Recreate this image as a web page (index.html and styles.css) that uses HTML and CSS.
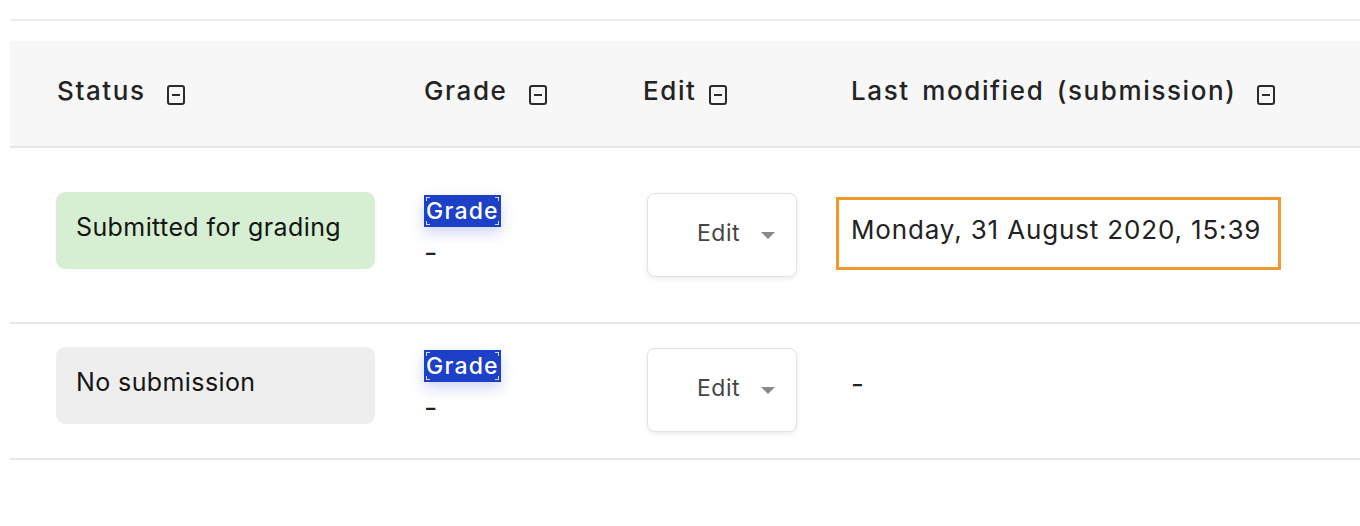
FILE: index.html
```html
<!DOCTYPE html>
<html lang="en">
    <head>
        <meta charset="UTF-8">
        <title>Submissions</title>
        <link rel="stylesheet" href="styles.css">
    </head>
    <body>
        <div class="page">
            <div class="rule"></div>
            <table class="grading">
                <colgroup>
                    <col class="c-status">
                    <col class="c-grade">
                    <col class="c-edit">
                    <col>
                </colgroup>
                <thead>
                    <tr>
                        <th class="status">Status<span class="hide"></span></th>
                        <th>Grade<span class="hide"></span></th>
                        <th>Edit<span class="hide near"></span></th>
                        <th class="date">Last modified (submission)<span class="hide"></span></th>
                    </tr>
                </thead>
                <tbody>
                    <tr class="tall">
                        <td class="status"><div class="badge submitted">Submitted for grading</div></td>
                        <td class="grade"><span class="mark">Grade</span><div class="dash">-</div></td>
                        <td class="edit"><button class="menu">Edit<span class="caret"></span></button></td>
                        <td class="date"><span class="stamp">Monday, 31 August 2020, 15:39</span></td>
                    </tr>
                    <tr class="short">
                        <td class="status"><div class="badge none">No submission</div></td>
                        <td class="grade"><span class="mark">Grade</span><div class="dash">-</div></td>
                        <td class="edit"><button class="menu">Edit<span class="caret"></span></button></td>
                        <td class="date"><div class="empty">-</div></td>
                    </tr>
                </tbody>
            </table>
        </div>
    </body>
</html>
```

FILE: styles.css
```css
body {
	margin: 0;
	background-color: white;
	font-family: Inter, "DejaVu Sans", sans-serif;
	color: #1f1f1f;
}
div.page {
	padding: 19px 0 0 10px;
}
div.rule {
	height: 2px;
	background-color: #ebebeb;
	margin-bottom: 20px;
}
table.grading {
	width: 100%;
	border-collapse: collapse;
	table-layout: fixed;
}
col.c-status {
	width: 414px;
}
col.c-grade {
	width: 219px;
}
col.c-edit {
	width: 193px;
}
th {
	height: 99px;
	padding: 0 0 6px 0;
	background-color: #f7f7f7;
	border-bottom: 2px solid #e6e6e6;
	text-align: left;
	font-weight: 500;
	font-size: 26px;
	letter-spacing: 1.6px;
	color: #232323;
	white-space: nowrap;
}
th.status {
	padding-left: 47px;
}
th.date {
	padding-left: 15px;
	word-spacing: 4px;
}
span.hide {
	display: inline-block;
	position: relative;
	width: 14px;
	height: 16px;
	margin-left: 21px;
	border: 2px solid #2b2b2b;
	border-radius: 3px;
	vertical-align: -5px;
}
span.hide.near {
	margin-left: 12px;
}
span.hide::after {
	content: "";
	position: absolute;
	left: 3px;
	right: 3px;
	top: 7px;
	height: 2px;
	background-color: #2b2b2b;
}
td {
	padding: 44px 0 45px 0;
	vertical-align: top;
	border-bottom: 2px solid #e6e6e6;
}
tr.short td {
	padding: 23px 0 26px 0;
}
td.status {
	padding-left: 46px !important;
}
td.edit {
	padding-left: 4px !important;
}
div.badge {
	box-sizing: border-box;
	width: 319px;
	height: 77px;
	padding: 20px 20px 0 20px;
	border-radius: 9px;
	font-size: 25px;
	line-height: 30px;
	letter-spacing: 0.4px;
	color: #151515;
}
div.badge.submitted {
	background-color: #d6efd3;
}
div.badge.none {
	background-color: #eeeeee;
}
span.mark {
	display: inline-block;
	margin-top: 3px;
	height: 32px;
	padding: 0 2px;
	font-size: 23px;
	font-weight: 500;
	line-height: 32px;
	letter-spacing: 1.2px;
	color: white;
	background:
		linear-gradient(#d5dcf7, #d5dcf7) 2px 2px / 4px 1px no-repeat,
		linear-gradient(#d5dcf7, #d5dcf7) 2px 2px / 1px 4px no-repeat,
		linear-gradient(#d5dcf7, #d5dcf7) right 2px top 2px / 4px 1px no-repeat,
		linear-gradient(#d5dcf7, #d5dcf7) right 2px top 2px / 1px 4px no-repeat,
		linear-gradient(#d5dcf7, #d5dcf7) left 2px bottom 2px / 4px 1px no-repeat,
		linear-gradient(#d5dcf7, #d5dcf7) left 2px bottom 2px / 1px 4px no-repeat,
		linear-gradient(#d5dcf7, #d5dcf7) right 2px bottom 2px / 4px 1px no-repeat,
		linear-gradient(#d5dcf7, #d5dcf7) right 2px bottom 2px / 1px 4px no-repeat,
		#1d40c8;
	box-shadow: 0 6px 14px rgba(40, 70, 210, 0.22);
}
div.dash {
	margin-top: 9px;
	font-size: 29px;
	line-height: 34px;
	color: #222;
}
button.menu {
	display: flex;
	align-items: center;
	box-sizing: border-box;
	width: 150px;
	height: 84px;
	margin-top: 1px;
	padding: 0 0 4px 49px;
	background-color: white;
	border: 1px solid #dfe3ea;
	border-radius: 8px;
	box-shadow: 0 2px 5px rgba(0, 0, 0, 0.08);
	font-family: inherit;
	font-size: 23px;
	letter-spacing: 0.5px;
	color: #454545;
	cursor: pointer;
}
span.caret {
	width: 0;
	height: 0;
	margin-left: 21px;
	margin-top: 4px;
	border-left: 7px solid transparent;
	border-right: 7px solid transparent;
	border-top: 7px solid #8a8a8a;
}
span.stamp {
	display: inline-block;
	box-sizing: border-box;
	height: 73px;
	margin-top: 5px;
	padding: 14px 17px 0 12px;
	border: 3px solid #f0992f;
	font-size: 26px;
	line-height: 32px;
	letter-spacing: 0.85px;
	white-space: nowrap;
	color: #222;
}
td.date {
	padding-left: 0;
}
div.empty {
	margin: 21px 0 0 15px;
	font-size: 28px;
	line-height: 32px;
	color: #222;
}
```
